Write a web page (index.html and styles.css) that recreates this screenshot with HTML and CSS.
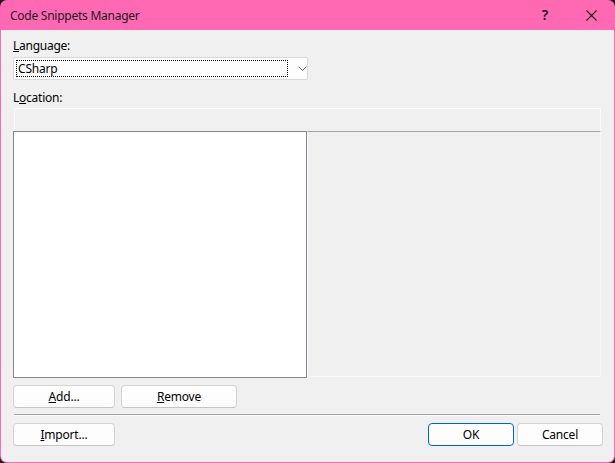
FILE: index.html
```html
<!DOCTYPE html>
<html>
<head>
<meta charset="utf-8">
<title>Code Snippets Manager</title>
<link rel="stylesheet" href="styles.css">
</head>
<body>
<div class="window">
  <div class="titlebar">
    <span class="title">Code Snippets Manager</span>
    <span class="tb-help">?</span>
    <span class="tb-close">
      <svg width="11" height="11" viewBox="0 0 11 11"><path d="M0.5 0.5 L10.5 10.5 M10.5 0.5 L0.5 10.5" stroke="#1a1a1a" stroke-width="1.1" fill="none"/></svg>
    </span>
  </div>
  <div class="client">
    <div class="label"><u>L</u>anguage:</div>
    <div class="combo">
      <div class="combo-focus">CSharp</div>
      <svg class="chevron" width="9" height="5" viewBox="0 0 9 5"><path d="M0.5 0.5 L4.5 4.5 L8.5 0.5" stroke="#606060" stroke-width="1" fill="none"/></svg>
    </div>
    <div class="label label-loc">L<u>o</u>cation:</div>
    <div class="locbox"></div>
    <div class="main-row">
      <div class="listbox"></div>
      <div class="detail"></div>
    </div>
    <div class="btn-row">
      <button class="btn btn-add"><u>A</u>dd...</button>
      <button class="btn btn-remove"><u>R</u>emove</button>
    </div>
    <div class="separator"></div>
    <div class="footer">
      <button class="btn btn-import"><u>I</u>mport...</button>
      <div class="spacer"></div>
      <button class="btn btn-ok">OK</button>
      <button class="btn btn-cancel">Cancel</button>
    </div>
  </div>
</div>
</body>
</html>
```

FILE: styles.css
```css
html, body {
  margin: 0;
  padding: 0;
  background: #1c1c1c;
}
body {
  width: 615px;
  height: 463px;
  overflow: hidden;
  font-family: "Noto Sans", "Open Sans", sans-serif;
  font-size: 12px;
  color: #000;
}
.window {
  width: 615px;
  height: 463px;
  background: #ff69b4;
  border-radius: 7px;
  display: flex;
  flex-direction: column;
  box-sizing: border-box;
  overflow: hidden;
}
.titlebar {
  height: 30px;
  flex: none;
  display: flex;
  align-items: center;
  padding-left: 10px;
  color: #1a1a1a;
}
.title {
  font-size: 12px;
  letter-spacing: -0.25px;
  flex: 1;
  padding-top: 1px;
}
.tb-help {
  font-size: 14px;
  font-weight: 600;
  width: 12px;
  text-align: center;
  margin-right: 35px;
  padding-bottom: 1px;
}
.tb-close {
  display: flex;
  margin-right: 18px;
}
.client {
  flex: 1;
  margin: 0 1px 1px 1px;
  background: #f0f0f0;
  padding: 8px 13px 0 12px;
  display: flex;
  flex-direction: column;
  border-radius: 0 0 6px 6px;
}
.label {
  height: 16px;
  line-height: 16px;
  letter-spacing: -0.25px;
}
.combo {
  margin-top: 3px;
  width: 295px;
  height: 23px;
  box-sizing: border-box;
  border: 1px solid #d9d9d9;
  border-radius: 2px;
  background: #fdfdfd;
  display: flex;
  align-items: center;
  padding-left: 2px;
}
.combo-focus {
  width: 273px;
  height: 17px;
  box-sizing: border-box;
  border: 1px dotted #000;
  line-height: 15px;
  padding-left: 1px;
  letter-spacing: -0.2px;
}
.chevron {
  margin-left: 10px;
}
.label-loc {
  margin-top: 10px;
}
.locbox {
  margin-top: 2px;
  margin-left: 1px;
  height: 23px;
  box-sizing: border-box;
  border: 1px solid #fbfbfb;
  border-bottom: none;
  background: #f0f0f0;
}
.main-row {
  display: flex;
  height: 247px;
}
.listbox {
  width: 294px;
  box-sizing: border-box;
  border: 1px solid #828790;
  background: #fff;
}
.detail {
  width: 294px;
  box-sizing: border-box;
  border: 1px solid #fafafa;
  border-top: 1px solid #a0a0a0;
  margin-bottom: 1px;
  background: #f0f0f0;
}
.btn-row {
  display: flex;
  margin-top: 7px;
  gap: 6px;
}
.btn {
  font-family: "Noto Sans", "Open Sans", sans-serif;
  font-size: 12px;
  letter-spacing: -0.2px;
  height: 23px;
  padding: 0;
  box-sizing: border-box;
  background: #fdfdfd;
  border: 1px solid #d3d3d3;
  border-bottom-color: #c4c4c4;
  border-radius: 4px;
  color: #000;
  line-height: 20px;
}
.btn-add, .btn-import {
  width: 102px;
}
.btn-remove {
  width: 116px;
}
.separator {
  margin-top: 6px;
  margin-left: 1px;
  height: 0;
  border-top: 1px solid #a0a0a0;
  border-bottom: 1px solid #fcfcfc;
  margin-right: 1px;
}
.footer {
  display: flex;
  margin-top: 7px;
}
.spacer {
  flex: 1;
}
.btn-ok {
  width: 86px;
  border: 1px solid #0067c0;
  margin-right: 3px;
}
.btn-cancel {
  width: 86px;
  margin-right: -2px;
}
```
